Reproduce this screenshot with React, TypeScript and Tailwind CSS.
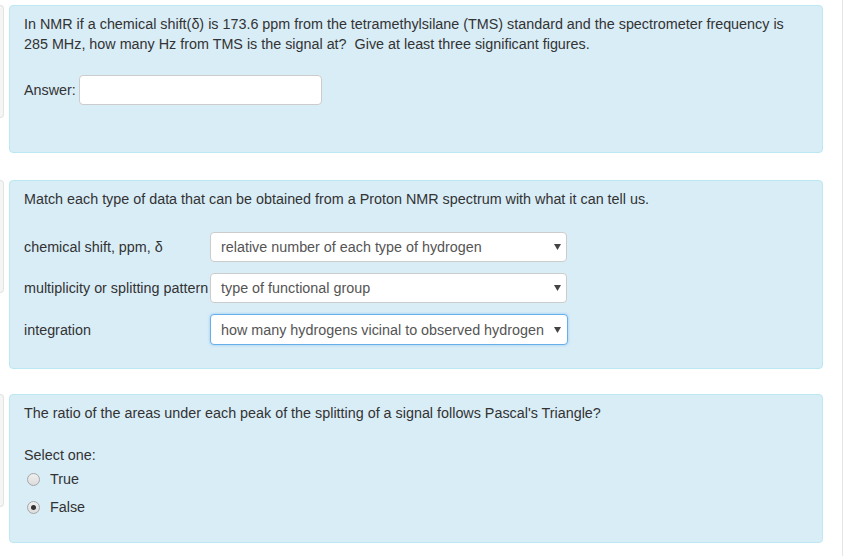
const font = "font-['Liberation_Sans',Arial,sans-serif]";

const InfoStub = () => (
  <div className="w-[4px] h-[113px] shrink-0 bg-[#f5f5f5] border border-l-0 border-[#e3e3e3] rounded-r-[4px]" />
);

const Arrow = () => (
  <svg width="7" height="6" viewBox="0 0 7 6" className="shrink-0">
    <polygon points="0,0 7,0 3.5,6" fill="#444" />
  </svg>
);

const Select = ({ value, focused }: { value: string; focused?: boolean }) => (
  <div
    className={
      focused
        ? "w-[358px] h-[31px] flex items-center justify-between pl-[10px] pr-[6px] bg-white rounded-[4px] border border-[#66afe9] shadow-[0_0_3px_rgba(102,175,233,0.6)] text-[#555]"
        : "w-[357px] h-[30px] flex items-center justify-between pl-[10px] pr-[5px] bg-white rounded-[4px] border border-[#ccc] text-[#555]"
    }
  >
    <span>{value}</span>
    <Arrow />
  </div>
);

const Radio = ({ checked }: { checked?: boolean }) => (
  <span className="w-[13px] h-[13px] rounded-full border border-[#a6a6a6] bg-gradient-to-b from-[#f0f0f0] to-[#dcdcdc] flex items-center justify-center">
    {checked && <span className="w-[5px] h-[5px] rounded-full bg-[#333]" />}
  </span>
);

const rows = [
  { label: "chemical shift, ppm, δ", value: "relative number of each type of hydrogen" },
  { label: "multiplicity or splitting pattern", value: "type of functional group" },
  { label: "integration", value: "how many hydrogens vicinal to observed hydrogen", focused: true },
];

export default function App() {
  return (
    <div className={`${font} w-[843px] min-h-[556px] bg-white border-r border-[#e5e5e5] pt-[5px] text-[14.35px] leading-[20px] text-[#333]`}>
      {/* question 1 */}
      <div className="flex items-start gap-[5px]">
        <InfoStub />
        <div className="w-[814px] h-[148px] bg-[#d9edf7] border border-[#bce8f1] rounded-[4px] pt-[8px] pl-[14px] pr-[30px]">
          <p>
            In NMR if a chemical shift(δ) is 173.6 ppm from the tetramethylsilane (TMS) standard and the spectrometer frequency is
            285 MHz, how many Hz from TMS is the signal at?&nbsp; Give at least three significant figures.
          </p>
          <div className="flex items-center mt-[21px]">
            <span className="w-[55px]">Answer:</span>
            <div className="w-[243px] h-[30px] bg-white border border-[#ccc] rounded-[4px]" />
          </div>
        </div>
      </div>

      {/* question 2 */}
      <div className="flex items-start gap-[5px] mt-[27px]">
        <InfoStub />
        <div className="w-[814px] h-[189px] bg-[#d9edf7] border border-[#bce8f1] rounded-[4px] pt-[8px] pl-[14px]">
          <p>Match each type of data that can be obtained from a Proton NMR spectrum with what it can tell us.</p>
          <div className="flex flex-col gap-[11px] mt-[23px]">
            {rows.map((r) => (
              <div key={r.label} className="flex items-center">
                <span className="w-[186px] whitespace-nowrap">{r.label}</span>
                <Select value={r.value} focused={r.focused} />
              </div>
            ))}
          </div>
        </div>
      </div>

      {/* question 3 */}
      <div className="flex items-start gap-[5px] mt-[25px]">
        <InfoStub />
        <div className="w-[814px] h-[149px] bg-[#d9edf7] border border-[#bce8f1] rounded-[4px] pt-[8px] pl-[14px]">
          <p>The ratio of the areas under each peak of the splitting of a signal follows Pascal's Triangle?</p>
          <p className="mt-[22px]">Select one:</p>
          <div className="flex flex-col pl-[3px]">
            <label className="flex items-center gap-[10px] h-[28px]">
              <Radio />
              <span>True</span>
            </label>
            <label className="flex items-center gap-[10px] h-[28px]">
              <Radio checked />
              <span>False</span>
            </label>
          </div>
        </div>
      </div>
    </div>
  );
}
